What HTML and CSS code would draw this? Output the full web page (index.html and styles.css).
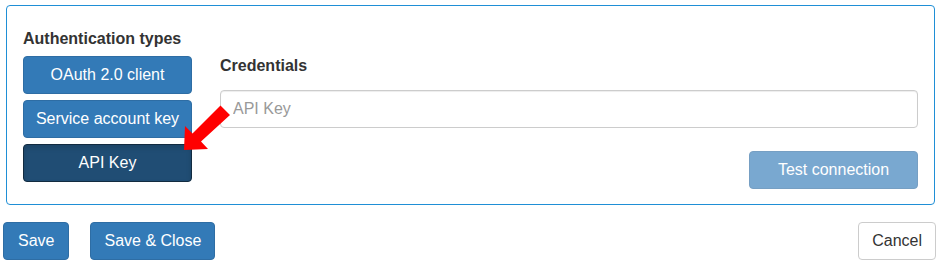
FILE: index.html
```html
<!DOCTYPE html>
<html>
<head>
<meta charset="utf-8">
<link rel="stylesheet" href="styles.css">
</head>
<body>
<div class="page">
  <div class="panel">
    <div class="types">
      <div class="heading">Authentication types</div>
      <button class="btn btn-primary">OAuth 2.0 client</button>
      <button class="btn btn-primary">Service account key</button>
      <button class="btn btn-primary active">API Key</button>
    </div>
    <div class="creds">
      <div class="heading">Credentials</div>
      <input class="input" type="text" placeholder="API Key">
      <div class="test-row">
        <button class="btn btn-primary disabled">Test connection</button>
      </div>
    </div>
  </div>
  <div class="footer">
    <div class="footer-left">
      <button class="btn btn-primary btn-auto">Save</button>
      <button class="btn btn-primary btn-auto btn-tight">Save &amp; Close</button>
    </div>
    <button class="btn btn-default btn-auto btn-tight">Cancel</button>
  </div>
  <svg class="arrow" width="70" height="60" viewBox="178 100 70 60">
    <polygon fill="#ff0000" points="220.5,105.5 230,115 201,141.5 208,149 184,150 185,126 192.5,133.5"/>
  </svg>
</div>
</body>
</html>
```

FILE: styles.css
```css
html, body {
  margin: 0;
  padding: 0;
  background: #ffffff;
}

.page {
  position: relative;
  width: 941px;
  height: 267px;
  font-family: "Liberation Sans", Arial, sans-serif;
  font-size: 16px;
  color: #333333;
  padding-top: 5px;
  box-sizing: border-box;
}

.panel {
  margin-left: 6px;
  width: 929px;
  box-sizing: border-box;
  border: 1px solid #1f8fd6;
  border-radius: 4px;
  padding: 24px 16px 15px 16px;
  display: flex;
  gap: 28px;
}

.heading {
  font-weight: bold;
  line-height: 18px;
}

.types {
  width: 169px;
  display: flex;
  flex-direction: column;
  gap: 6px;
}

.types .heading {
  margin-bottom: 2px;
}

.btn {
  font-family: "Liberation Sans", Arial, sans-serif;
  font-size: 16px;
  line-height: 20px;
  height: 38px;
  border-radius: 4px;
  border: 1px solid transparent;
  box-sizing: border-box;
  padding: 0 6px;
  text-align: center;
  cursor: pointer;
  margin: 0;
}

.types .btn,
.test-row .btn {
  width: 169px;
}

.btn-primary {
  background: #337ab7;
  border-color: #2e6da4;
  color: #ffffff;
}

.btn-primary.active {
  background: #204d74;
  border-color: #122b40;
  box-shadow: inset 0 3px 5px rgba(0, 0, 0, 0.125);
}

.btn-primary.disabled {
  opacity: 0.65;
  cursor: not-allowed;
}

.btn-default {
  background: #ffffff;
  border-color: #cccccc;
  color: #333333;
}

.btn-auto {
  padding: 0 14px;
}

.btn-auto.btn-tight {
  padding: 0 13px;
}

.creds {
  flex: 1;
  display: flex;
  flex-direction: column;
  padding-top: 27px;
}

.input {
  margin-top: 15px;
  height: 38px;
  box-sizing: border-box;
  border: 1px solid #cccccc;
  border-radius: 4px;
  box-shadow: inset 0 1px 1px rgba(0, 0, 0, 0.075);
  padding: 0 12px;
  font-family: "Liberation Sans", Arial, sans-serif;
  font-size: 16px;
  color: #555555;
}

.input::placeholder {
  color: #999999;
}

.test-row {
  margin-top: 23px;
  display: flex;
  justify-content: flex-end;
}

.footer {
  margin-top: 17px;
  padding: 0 5px 0 3px;
  display: flex;
  justify-content: space-between;
}

.footer-left {
  display: flex;
  gap: 21px;
}

.arrow {
  position: absolute;
  left: 178px;
  top: 100px;
}
```
